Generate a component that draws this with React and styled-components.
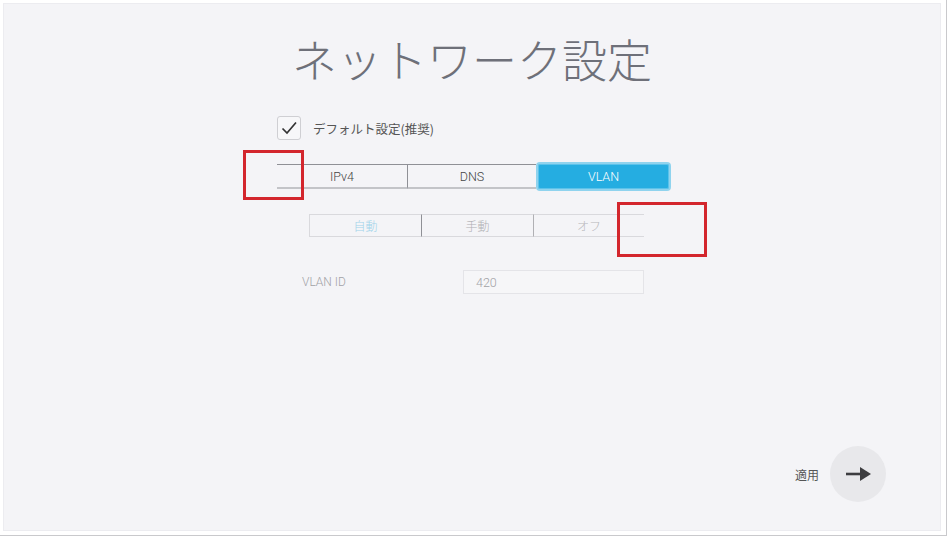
import styled, { createGlobalStyle } from 'styled-components'

const GlobalStyle = createGlobalStyle`
  html, body{
    margin: 0;
    padding: 0;
    background: #ffffff;
  }
  body{
    font-family: "Roboto", "Noto Sans CJK JP", sans-serif;
  }
`

const Frame = styled.div`
  position: relative;
  box-sizing: border-box;
  width: 947px;
  height: 536px;
  padding: 3px 5px 4px 3px;
  border-right: 1px solid #c9c9cc;
  border-bottom: 1px solid #c9c9cc;
`

const Panel = styled.main`
  box-sizing: border-box;
  height: 100%;
  display: flex;
  flex-direction: column;
  padding: 27px 0 28px;
  background: #f4f4f7;
  border: 1px solid #ececf0;
`

const Title = styled.h1`
  margin: 0;
  text-align: center;
  font-family: "Noto Sans CJK JP", sans-serif;
  font-weight: 300;
  font-size: 45px;
  line-height: 56px;
  color: #6e7079;
`

const Form = styled.div`
  display: flex;
  flex-direction: column;
  padding-left: 273px;
`

const CheckRow = styled.label`
  display: flex;
  align-items: center;
  gap: 12px;
  margin-top: 29px;
  height: 24px;
  font-family: "Noto Sans CJK JP", sans-serif;
  font-size: 12.5px;
  color: #555;
`

const CheckBox = styled.span`
  box-sizing: border-box;
  width: 24px;
  height: 24px;
  border: 1px solid #cfcfd3;
  border-radius: 3px;
  background: #f7f7f9;
  display: flex;
  align-items: center;
  justify-content: center;
`

const Tabs = styled.div`
  display: flex;
  align-items: center;
  margin-top: 22px;
  height: 29px;
`

const Tab = styled.div`
  box-sizing: border-box;
  width: ${p => p.$w}px;
  height: ${p => p.$active ? 29 : 25}px;
  display: flex;
  align-items: center;
  justify-content: center;
  font-size: 12.5px;
  font-weight: 300;
  border-top: 1px solid #8f9096;
  border-bottom: 2px solid #c3c4c8;
  border-right: ${p => p.$divider ? '1px solid #8f9096' : 'none'};
  color: #444;
  ${p => p.$active && `
    border: 2px solid #8fd3ee;
    border-radius: 4px;
    background: #25ade1;
    color: #ffffff;
    box-shadow: inset 0 0 0 1px #5cc2ea;
  `}
`

const Segment = styled.div`
  display: flex;
  margin-top: 23px;
  margin-left: 32px;
  height: 23px;
`

const SegItem = styled.div`
  box-sizing: border-box;
  width: ${p => p.$w}px;
  display: flex;
  align-items: center;
  justify-content: center;
  font-family: "Noto Sans CJK JP", sans-serif;
  font-weight: 300;
  font-size: 12px;
  color: ${p => p.$color};
  border-top: 1px solid #d9d9dd;
  border-bottom: 1px solid #d9d9dd;
  border-left: 1px solid ${p => p.$left};
`

const FieldRow = styled.div`
  display: flex;
  align-items: center;
  margin-top: 33px;
  margin-left: 25px;
  height: 24px;
`

const FieldLabel = styled.span`
  width: 161px;
  font-size: 12px;
  font-weight: 300;
  color: #a2a2a6;
`

const FieldInput = styled.div`
  box-sizing: border-box;
  width: 181px;
  height: 24px;
  padding-left: 12px;
  display: flex;
  align-items: center;
  border: 1px solid #e4e4e8;
  background: #f6f6f8;
  font-size: 12.5px;
  font-weight: 300;
  color: #a2a2a6;
`

const Footer = styled.div`
  margin-top: auto;
  display: flex;
  align-items: center;
  justify-content: flex-end;
  gap: 11px;
  padding-right: 54px;
`

const ApplyText = styled.span`
  font-family: "Noto Sans CJK JP", sans-serif;
  font-size: 12px;
  color: #555;
`

const RoundButton = styled.button`
  width: 56px;
  height: 56px;
  padding: 0;
  border: none;
  border-radius: 50%;
  background: #e8e8eb;
  display: flex;
  align-items: center;
  justify-content: center;
`

const Marker = styled.div`
  position: absolute;
  box-sizing: border-box;
  left: ${p => p.$x}px;
  top: ${p => p.$y}px;
  width: ${p => p.$w}px;
  height: ${p => p.$h}px;
  border: 3px solid #d3262d;
  pointer-events: none;
`

function App() {
  return (
    <>
      <GlobalStyle />
      <Frame>
        <Panel>
          <Title>ネットワーク設定</Title>
          <Form>
            <CheckRow>
              <CheckBox>
                <svg width="18" height="18" viewBox="0 0 18 18">
                  <path d="M2.5 9.5 L7 14 L16 3.5" fill="none" stroke="#333" strokeWidth="1.7" />
                </svg>
              </CheckBox>
              デフォルト設定(推奨)
            </CheckRow>
            <Tabs>
              <Tab $w={131} $divider>IPv4</Tab>
              <Tab $w={128}>DNS</Tab>
              <Tab $w={135} $active>VLAN</Tab>
            </Tabs>
            <Segment>
              <SegItem $w={112} $color="#9fd3ea" $left="#d9d9dd">自動</SegItem>
              <SegItem $w={112} $color="#b0b0b4" $left="#8f9096">手動</SegItem>
              <SegItem $w={111} $color="#b8b8bc" $left="#b0b0b4">オフ</SegItem>
            </Segment>
            <FieldRow>
              <FieldLabel>VLAN ID</FieldLabel>
              <FieldInput>420</FieldInput>
            </FieldRow>
          </Form>
          <Footer>
            <ApplyText>適用</ApplyText>
            <RoundButton aria-label="適用">
              <svg width="56" height="56" viewBox="0 0 56 56">
                <line x1="16" y1="28" x2="32" y2="28" stroke="#3d3d40" strokeWidth="2.6" />
                <polygon points="30,21 41,28 30,35" fill="#3d3d40" />
              </svg>
            </RoundButton>
          </Footer>
        </Panel>
        <Marker $x={243} $y={150} $w={61} $h={50} />
        <Marker $x={617} $y={202} $w={90} $h={55} />
      </Frame>
    </>
  )
}

export default App
